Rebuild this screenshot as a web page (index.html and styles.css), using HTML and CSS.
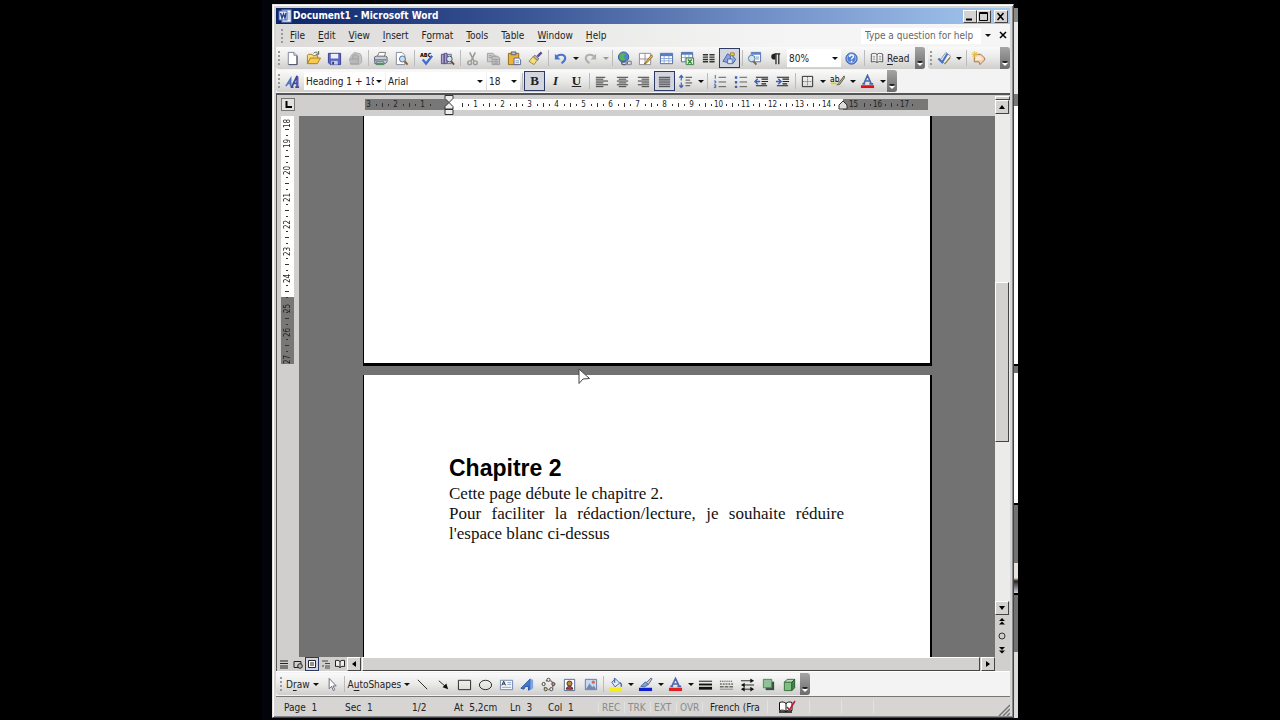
FILE: index.html
```html
<!DOCTYPE html>
<html lang="en">
<head>
    <meta charset="UTF-8">
    <meta name="viewport" content="width=device-width, initial-scale=1.0">
    <title>Document1 - Microsoft Word</title>
    <link rel="stylesheet" href="styles.css">
</head>
<body>
<div class="desktop">
    <div class="window">
        <header class="titlebar">
            <svg class="app-icon" width="14" height="14" viewBox="0 0 14 14"><rect x="4" y="1" width="9" height="12" fill="#fff" stroke="#7d93c8"/><path d="M6 4h6M6 6h6M6 8h6M6 10h6" stroke="#9db0dc"/><rect x="1" y="2" width="8" height="9" fill="#e6ecfa" stroke="#4c68b0"/><path d="M2.500 4l1.500 5 1.500-4 1.500 4 1-5" fill="none" stroke="#24408e" stroke-width="1.400"/></svg>
            <h1>Document1 - Microsoft Word</h1>
            <div class="caption-buttons">
                <button class="caption" aria-label="Minimize"><svg width="10" height="9"><path d="M1 7.500h6" stroke="#000" stroke-width="2"/></svg></button>
                <button class="caption" aria-label="Maximize"><svg width="10" height="9"><path d="M.500.500h8v8h-8zM.500 1.500h8" fill="none" stroke="#000"/></svg></button>
                <button class="caption close" aria-label="Close"><svg width="10" height="9"><path d="M1.500 1l6 7M7.500 1l-6 7" stroke="#000" stroke-width="1.600"/></svg></button>
            </div>
        </header>

        <nav class="menubar">
            <i class="grip"></i>
            <button><u>F</u>ile</button>
            <button><u>E</u>dit</button>
            <button><u>V</u>iew</button>
            <button><u>I</u>nsert</button>
            <button>F<u>o</u>rmat</button>
            <button><u>T</u>ools</button>
            <button>T<u>a</u>ble</button>
            <button><u>W</u>indow</button>
            <button><u>H</u>elp</button>
            <input class="ask" type="text" aria-label="Help question" placeholder="Type a question for help">
            <button class="arrow" aria-label="Recent questions"></button>
            <button class="close-doc" aria-label="Close document"><svg width="8" height="8"><path d="M1 1l6 6M7 1l-6 6" stroke="#000" stroke-width="1.500"/></svg></button>
        </nav>

        <div class="toolbar-row">
            <div class="toolbar">
                <i class="grip"></i>
                <button class="tool" aria-label="New"><svg viewBox="0 0 16 16"><path d="M3.500 1.500h6l3 3v10h-9z" fill="#fff" stroke="#7a7f95"/><path d="M9.500 1.500v3h3" fill="#dfe3ef" stroke="#7a7f95"/><path d="M4 14.500h9V5" fill="none" stroke="#4d5266"/></svg></button>
                <button class="tool" aria-label="Open"><svg viewBox="0 0 16 16"><path d="M1.500 13.500v-9l1-1h4l1 1.500h5v3" fill="#f6dd86" stroke="#a57c22"/><path d="M1.500 13.500l3-6h11l-3.500 6z" fill="#fbc94b" stroke="#a57c22"/><path d="M8 2.500c2-2 4-1.500 5 .500M13.500 0v3.500h-3" fill="none" stroke="#555"/></svg></button>
                <button class="tool" aria-label="Save"><svg viewBox="0 0 16 16"><path d="M1.500 2.500h13v12h-11l-2-2z" fill="#5865c4" stroke="#36408e"/><path d="M4 3h8v5H4z" fill="#edf0fa"/><path d="M4.500 10.500h7v4h-7z" fill="#c7cce6"/><path d="M5.500 11.500h2v3h-2z" fill="#323a78"/></svg></button>
                <button class="tool" aria-label="Permission" disabled><svg viewBox="0 0 16 16"><path d="M4 4l3-2.500 6 1.500 1.500 3v6l-3 2.500H3L1.500 9z" fill="#c4c4c4" stroke="#adadad"/><path d="M2 8.500h9v5H2M5 8.500V5l3-1.500 3 2v3" fill="#b8b8b8" stroke="#a2a2a2"/></svg></button>
                <i class="sep"></i>
                <button class="tool" aria-label="Print"><svg viewBox="0 0 16 16"><path d="M4.500 6l2-4.500h7L12 6" fill="#fff" stroke="#777"/><path d="M1.500 6.500l2-1h10l1.500 1v5l-2 2h-11z" fill="#c9cfd6" stroke="#5b6474"/><path d="M2 9.500h12" stroke="#49536b"/><path d="M3.500 11.500h8v3h-8z" fill="#fff" stroke="#5b6474"/><path d="M4 13.500h7" stroke="#39a24b" stroke-width="2"/></svg></button>
                <button class="tool" aria-label="Print Preview"><svg viewBox="0 0 16 16"><path d="M2.500 1.500h6l3 3v10h-9z" fill="#fff" stroke="#8087a0"/><circle cx="9" cy="8.500" r="3.200" fill="#c3def3" stroke="#5b6a85"/><path d="M11.500 11l3 3.500" stroke="#8a5a20" stroke-width="2"/></svg></button>
                <i class="sep"></i>
                <button class="tool" aria-label="Spelling and Grammar"><svg viewBox="0 0 16 16"><text x="1" y="6" class="icon-abc">ABC</text><path d="M4 9l3.500 4.500L14 5" fill="none" stroke="#3f6fd0" stroke-width="2.500"/></svg></button>
                <button class="tool" aria-label="Research"><svg viewBox="0 0 16 16"><path d="M1.500 3.500h3v10h-3zM4.500 2.500h3v11h-3z" fill="#aaa0cd" stroke="#5a4d8c"/><path d="M8 3.500h4v10H8z" fill="#d8d4ea" stroke="#6a6090"/><circle cx="10" cy="8.500" r="3" fill="#d1e3f2" stroke="#4c5568"/><path d="M12 11l3 3.500" stroke="#715028" stroke-width="2"/></svg></button>
                <i class="sep"></i>
                <button class="tool" aria-label="Cut" disabled><svg viewBox="0 0 16 16"><path d="M5 1.500l4.500 9M11 1.500l-4.500 9" fill="none" stroke="#999" stroke-width="1.600"/><circle cx="5" cy="12.500" r="2" fill="none" stroke="#999" stroke-width="1.500"/><circle cx="11" cy="12.500" r="2" fill="none" stroke="#999" stroke-width="1.500"/></svg></button>
                <button class="tool" aria-label="Copy" disabled><svg viewBox="0 0 16 16"><path d="M1.500 2.500h6l2 2v7h-8z" fill="#ccc" stroke="#a0a0a0"/><path d="M6.500 5.500h6l2 2v7h-8z" fill="#c2c2c2" stroke="#999"/><path d="M8 9h5M8 11h5M8 13h5M3 5h3M3 7h3" stroke="#999"/></svg></button>
                <button class="tool" aria-label="Paste"><svg viewBox="0 0 16 16"><path d="M1.500 2.500h11v12h-11z" fill="#edb43a" stroke="#8f6a1a"/><path d="M4.500 1h5v3h-5z" fill="#b9bccc" stroke="#5c5f70"/><path d="M7.500 7.500h5l2 2v5h-7z" fill="#fff" stroke="#58648e"/><path d="M9 10.500h4M9 12.500h4" stroke="#7d8fc5"/></svg></button>
                <button class="tool" aria-label="Format Painter"><svg viewBox="0 0 16 16"><path d="M14.500 1.500L10 6" stroke="#5c4a8e" stroke-width="2.500"/><path d="M7.500 4.500l4 4-2 1.500-4-4z" fill="#b5b5c2" stroke="#6d6d7a"/><path d="M5.500 6l4 4-3 4.500L1 11z" fill="#f8dd7b" stroke="#a4852e"/></svg></button>
                <i class="sep"></i>
                <button class="tool" aria-label="Undo"><svg viewBox="0 0 16 16"><path d="M3 7c2-3.500 9-4.500 10 0 .500 3-2 4.500-4 6" fill="none" stroke="#4676cf" stroke-width="2.200"/><path d="M2 3v6h6z" fill="#4676cf"/></svg></button>
                <button class="arrow" aria-label="Undo list"></button>
                <button class="tool" aria-label="Redo" disabled><svg viewBox="0 0 16 16"><path d="M13 7c-2-3.500-9-4.500-10 0-.500 3 2 4.500 4 6" fill="none" stroke="#b0b0b0" stroke-width="2.200"/><path d="M14 3v6H8z" fill="#b0b0b0"/></svg></button>
                <button class="arrow" aria-label="Redo list" disabled></button>
                <i class="sep"></i>
                <button class="tool" aria-label="Hyperlink"><svg viewBox="0 0 16 16"><circle cx="7" cy="6.500" r="5.500" fill="#4b87cf" stroke="#2c5b93"/><path d="M3 4c2-3 5-2 6-1L7 6l2 3-3 2-3-3z" fill="#59b25a"/><rect x="5" y="11" width="6" height="3.500" rx="1.700" fill="none" stroke="#5b6373" stroke-width="1.500"/><rect x="9.500" y="11" width="6" height="3.500" rx="1.700" fill="none" stroke="#8a93a3" stroke-width="1.500"/></svg></button>
                <button class="tool" aria-label="Tables and Borders"><svg viewBox="0 0 16 16"><path d="M1.500 2.500h12v12h-12z" fill="#fff" stroke="#8c8c98"/><path d="M7.500 2.500v12M1.500 8.500h12" stroke="#8c8c98"/><path d="M14.500 4L8 12l-1.500 2 2.500-1 6.500-7z" fill="#f0c04a" stroke="#8d6823"/></svg></button>
                <button class="tool" aria-label="Insert Table"><svg viewBox="0 0 16 16"><path d="M1.500 2.500h13v11h-13z" fill="#fff" stroke="#43649f"/><path d="M2 3h12v2.500H2z" fill="#547cc8"/><path d="M5.500 5v8M10.500 5v8M2 8h12M2 10.500h12" stroke="#8fa8d6"/></svg></button>
                <button class="tool" aria-label="Insert Excel Worksheet"><svg viewBox="0 0 16 16"><path d="M1.500 1.500h12v10h-12z" fill="#fff" stroke="#43649f"/><path d="M2 2h11v2H2z" fill="#547cc8"/><path d="M5.500 4v7M9.500 4v7M2 7h11" stroke="#8fa8d6"/><path d="M6.500 7.500h8v7h-8z" fill="#e3f2e2" stroke="#3b7d40"/><path d="M8.500 9l4 4.500M12.500 9l-4 4.500" stroke="#2d8a38" stroke-width="1.500"/></svg></button>
                <button class="tool" aria-label="Columns"><svg viewBox="0 0 16 16"><path d="M2 4h5.500M2 6.500h5.500M2 9h5.500M2 11.500h5.500M9 4h5.500M9 6.500h5.500M9 9h5.500M9 11.500h5.500" stroke="#333" stroke-width="1.500"/></svg></button>
                <button class="tool active" aria-label="Drawing"><svg viewBox="0 0 16 16"><path d="M1 11l5-8 3 2v8z" fill="#8ba4dc" stroke="#4461a8"/><path d="M6 8.500h5v5H6z" fill="#dde7f8" stroke="#51679b"/><path d="M9 2h4v3H9z" fill="#f2ca4d" stroke="#a58326"/><path d="M11 5l3.500 4-3 4.500" fill="#8ab0e6" stroke="#30548e"/></svg></button>
                <i class="sep"></i>
                <button class="tool" aria-label="Document Map"><svg viewBox="0 0 16 16"><path d="M4.500 1.500h10v10h-10z" fill="#fff" stroke="#4c6eb0"/><path d="M5 2h9v2H5z" fill="#5e86d0"/><path d="M9 6.500h4M9 8.500h4" stroke="#7793c6"/><circle cx="5" cy="8" r="3.500" fill="#cbe5f4" stroke="#55779c"/><path d="M7 11l3 3.500" stroke="#8a6330" stroke-width="2"/></svg></button>
                <button class="tool" aria-label="Show paragraph marks"><svg viewBox="0 0 16 16"><path d="M8 3H6.500a3 3 0 0 0 0 6H8z" fill="#222"/><path d="M8.500 3v11M11.500 3v11M7 3h6" stroke="#222" stroke-width="1.300"/></svg></button>
                <span class="combo combo-zoom"><select aria-label="Zoom"><option>80%</option></select></span>
                <button class="tool" aria-label="Word Help"><svg viewBox="0 0 16 16"><circle cx="8" cy="8" r="6" fill="#4f7fd6" stroke="#2f56a4"/><circle cx="8" cy="8" r="4.700" fill="none" stroke="#bcd2f6" stroke-width=".800"/><path d="M6 6.500c0-3 4-3 4-.500 0 1.500-2 1.500-2 3M8 10.500v1.500" fill="none" stroke="#fff" stroke-width="1.500"/></svg></button>
                <i class="sep"></i>
                <button class="text-tool read"><svg width="14" height="14" viewBox="0 0 16 16"><path d="M1.500 3.500c3-1 5-1 6.500.500 1.500-1.500 3.500-1.500 6.500-.500v9c-3-.700-5-.700-6.500.800-1.500-1.500-3.500-1.500-6.500-.800zM8 4v9" fill="#fff" stroke="#444"/><path d="M3 6h3M3 8h3M3 10h3M10 6h3M10 8h3M10 10h3" stroke="#888"/></svg><span><u>R</u>ead</span></button>
                <button class="more" aria-label="Toolbar options"></button>
            </div>
            <div class="toolbar review">
                <i class="grip"></i>
                <button class="tool" aria-label="Final review"><svg viewBox="0 0 16 16"><path d="M9.500 1.500l5 4-6 8-5-4z" fill="#f4f4fa" stroke="#8b90a8"/><path d="M1.500 8l4 4 5.500-9" fill="none" stroke="#4575c8" stroke-width="2.300"/><path d="M8 14l6-7" stroke="#a3844c" stroke-width="1.500"/></svg></button>
                <button class="arrow" aria-label="Review list"></button>
                <i class="sep"></i>
                <button class="tool" aria-label="Insert comment"><svg viewBox="0 0 16 16"><path d="M3.500 3.500h7l4 4v2l-5 5-1-3h-5z" fill="#f6d3b0" stroke="#a4704a"/><path d="M5 6.500h6M5 8.500h7" stroke="#fff"/><path d="M4 0v7M.500 3.500h7M1.500 1l5 5M6.500 1l-5 5" stroke="#e8c03a"/></svg></button>
                <button class="more" aria-label="Toolbar options"></button>
            </div>
        </div>

        <div class="toolbar-row">
            <div class="toolbar">
                <i class="grip"></i>
                <button class="tool" aria-label="Styles and Formatting"><svg viewBox="0 0 16 16"><path d="M1 13L6 5v8M3 10h3" fill="none" stroke="#4f70be" stroke-width="1.700"/><path d="M7 14l6-12v12M9 10h4M11 14h4M6 14h3" fill="none" stroke="#3a4c9a" stroke-width="2"/><path d="M14 3v10" stroke="#9a72b7"/></svg></button>
                <span class="combo combo-style"><select aria-label="Style"><option>Heading 1 + 18 pt</option></select></span>
                <span class="combo combo-font"><select aria-label="Font"><option>Arial</option></select></span>
                <span class="combo combo-size"><select aria-label="Font Size"><option>18</option></select></span>
                <i class="sep"></i>
                <button class="tool letter active" aria-label="Bold"><b>B</b></button>
                <button class="tool letter" aria-label="Italic"><em>I</em></button>
                <button class="tool letter" aria-label="Underline"><u>U</u></button>
                <i class="sep"></i>
                <button class="tool" aria-label="Align Left"><svg viewBox="0 0 16 16"><path d="M2 3.500h10M2 5.500h8M2 7.500h13M2 9.500h8M2 11.500h13M2 13.500h8" stroke="#333"/></svg></button>
                <button class="tool" aria-label="Center"><svg viewBox="0 0 16 16"><path d="M2 3.500h12M4 5.500h8M2 7.500h12M4 9.500h8M2 11.500h12M4 13.500h8" stroke="#333"/></svg></button>
                <button class="tool" aria-label="Align Right"><svg viewBox="0 0 16 16"><path d="M2 3.500h12M6 5.500h8M2 7.500h12M6 9.500h8M2 11.500h12M6 13.500h8" stroke="#333"/></svg></button>
                <button class="tool active" aria-label="Justify"><svg viewBox="0 0 16 16"><path d="M2 3.500h12M2 5.500h12M2 7.500h12M2 9.500h12M2 11.500h12M2 13.500h12" stroke="#333"/></svg></button>
                <button class="tool" aria-label="Line Spacing"><svg viewBox="0 0 16 16"><path d="M3.500 2v5M3.500 9v5M1.500 4l2-2.500 2 2.500M1.500 12l2 2.500 2-2.500" fill="none" stroke="#4263b5" stroke-width="1.300"/><path d="M8 3.500h7M8 6.500h5M8 9.500h7M8 12.500h5" stroke="#444"/></svg></button>
                <button class="arrow" aria-label="Line spacing list"></button>
                <i class="sep"></i>
                <button class="tool" aria-label="Numbering"><svg viewBox="0 0 16 16"><path d="M3.500 1v4M2 7.500h2v2H2.500M2 11.500h2v3H2M2.500 13H4" fill="none" stroke="#3d61b8"/><path d="M7 3.500h8M7 8.500h8M7 13.500h8" stroke="#555"/></svg></button>
                <button class="tool" aria-label="Bullets"><svg viewBox="0 0 16 16"><path d="M2 2.500h2.500V5H2zM2 7.500h2.500V10H2zM2 12.500h2.500V15H2z" fill="#3d61b8"/><path d="M7 3.500h8M7 8.500h8M7 13.500h8" stroke="#555"/></svg></button>
                <button class="tool" aria-label="Decrease Indent"><svg viewBox="0 0 16 16"><path d="M2 3.500h13M8 5.500h7M8 8h7M8 10.500h5M2 12.500h12" stroke="#222" stroke-width="1.200"/><path d="M6.500 8H1M4 5L1 8l3 3" fill="none" stroke="#3d61b8" stroke-width="1.500"/></svg></button>
                <button class="tool" aria-label="Increase Indent"><svg viewBox="0 0 16 16"><path d="M2 3.500h13M8 5.500h7M8 8h7M8 10.500h5M2 12.500h12" stroke="#222" stroke-width="1.200"/><path d="M1 8h5.500M3.500 5l3 3-3 3" fill="none" stroke="#3d61b8" stroke-width="1.500"/></svg></button>
                <i class="sep"></i>
                <button class="tool" aria-label="Outside Border"><svg viewBox="0 0 16 16"><path d="M2.500 2.500h11v11h-11z" fill="none" stroke="#222"/><path d="M8 3v10M3 8h10" stroke="#555" stroke-dasharray="1 1"/></svg></button>
                <button class="arrow" aria-label="Border list"></button>
                <button class="tool" aria-label="Highlight"><svg viewBox="0 0 16 16"><text x="0" y="8" class="icon-ab">ab</text><path d="M15 2L9 10l-2 2 3-.500L15.500 4z" fill="#bdbdb4" stroke="#55553f"/><path d="M1 13.500h13" stroke="#d8d8cf" stroke-width="3"/><path d="M1 10h6" stroke="#d7cf3a" stroke-width="2"/></svg></button>
                <button class="arrow" aria-label="Highlight colors"></button>
                <button class="tool" aria-label="Font Color"><svg viewBox="0 0 16 16"><path d="M4 10.500L8 1.500l4 9M5.500 7.500h5M2.500 10.500h3M10 10.500h4" fill="none" stroke="#4a67ae" stroke-width="1.700"/><path d="M1 12h14v3H1z" fill="#e01010"/></svg></button>
                <button class="arrow" aria-label="Font colors"></button>
                <button class="more" aria-label="Toolbar options"></button>
            </div>
        </div>

        <main class="workspace">
            <button class="tab-kind" aria-label="Left tab"><svg width="7" height="7"><path d="M1.500 0v6H7" fill="none" stroke="#000" stroke-width="2"/></svg></button>

            <div class="ruler">
                <ol class="zone margin before"><li>3</li><li>2</li><li>1</li></ol>
                <ol class="zone text">
                    <li>1</li><li>2</li><li>3</li><li>4</li><li>5</li><li>6</li><li>7</li>
                    <li>8</li><li>9</li><li>10</li><li>11</li><li>12</li><li>13</li><li>14</li>
                </ol>
                <ol class="zone margin after"><li>15</li><li>16</li><li>17</li></ol>
                <svg class="indent first" width="10" height="20" viewBox="0 0 10 20"><path d="M1 .500h8v3l-4 4-4-4zM5 7.500l4 4v2.500H1v-2.500zM1 14.500h8v5H1z" fill="#eee" stroke="#333"/></svg>
                <svg class="indent right" width="10" height="10" viewBox="0 0 10 10"><path d="M5 1l4 4v4H1V5z" fill="#ddd" stroke="#333"/></svg>
            </div>

            <div class="vruler">
                <ol class="zone text"><li>18</li><li>19</li><li>20</li><li>21</li><li>22</li><li>23</li><li>24</li></ol>
                <ol class="zone margin"><li>25</li><li>26</li><li>27</li></ol>
            </div>

            <div class="canvas">
                <section class="page page-end"></section>
                <article class="page">
                    <h2>Chapitre 2</h2>
                    <p>Cette page débute le chapitre 2.</p>
                    <p>Pour faciliter la rédaction/lecture, je souhaite réduire l'espace blanc ci-dessus</p>
                </article>
                <svg class="pointer" width="12" height="17" viewBox="0 0 12 17"><path d="M1 1v14.500l4-4.500 6.500-.500z" fill="#fff" stroke="#444"/></svg>
            </div>

            <div class="vscroll">
                <i class="splitter"></i>
                <button class="scroll-btn up" aria-label="Scroll up"></button>
                <div class="track"><i class="thumb"></i></div>
                <button class="scroll-btn down" aria-label="Scroll down"></button>
                <button class="browse" aria-label="Previous page"><svg width="8" height="8"><path d="M4 0l3 3H1zM4 3.500l3 3H1z"/></svg></button>
                <button class="browse" aria-label="Select browse object"><svg width="8" height="8"><circle cx="4" cy="4" r="3" fill="#ccc" stroke="#333"/></svg></button>
                <button class="browse" aria-label="Next page"><svg width="8" height="8"><path d="M4 4L1 1h6zM4 7.500l-3-3h6z"/></svg></button>
            </div>

            <div class="bottom-row">
                <button class="view" aria-label="Normal View"><svg viewBox="0 0 12 12"><path d="M2 3h8M2 5.500h8M2 8h8M2 10h8" stroke="#222"/></svg></button>
                <button class="view" aria-label="Web Layout View"><svg viewBox="0 0 12 12"><path d="M2 3.500h7v6H2z" fill="none" stroke="#222"/><circle cx="8" cy="8" r="2.300" fill="#bbb" stroke="#222"/></svg></button>
                <button class="view active" aria-label="Print Layout View"><svg viewBox="0 0 12 12"><path d="M2.500 2.500h7v7h-7z" fill="#fff" stroke="#222"/><path d="M4 5h4M4 7h4" stroke="#222"/></svg></button>
                <button class="view" aria-label="Outline View"><svg viewBox="0 0 12 12"><path d="M2 3h6M5 5.500h5M2 8h2M5 8h5M5 10h5" stroke="#444"/></svg></button>
                <button class="view" aria-label="Reading View"><svg viewBox="0 0 12 12"><path d="M1.500 2.500c2-.500 3.500 0 4.500 1 1-1 2.500-1.500 4.500-1v6c-2-.500-3.500 0-4.500 1-1-1-2.500-1.500-4.500-1zM6 3v7" fill="#eee" stroke="#222"/></svg></button>
                <button class="scroll-btn left" aria-label="Scroll left"></button>
                <i class="hthumb"></i>
                <button class="scroll-btn right" aria-label="Scroll right"></button>
            </div>
        </main>

        <div class="toolbar-row drawing">
            <div class="toolbar">
                <i class="grip"></i>
                <button class="text-tool"><span>D<u>r</u>aw</span><i class="caret"></i></button>
                <button class="tool" aria-label="Select Objects"><svg viewBox="0 0 16 16"><path d="M5.500 1.500v11l2.500-2.500 2 4.500 1.500-1-2-4h3.500z" fill="#fff" stroke="#667"/></svg></button>
                <i class="sep"></i>
                <button class="text-tool"><span>A<u>u</u>toShapes</span><i class="caret"></i></button>
                <button class="tool" aria-label="Line"><svg viewBox="0 0 16 16"><path d="M3 3l10 10" stroke="#222"/></svg></button>
                <button class="tool" aria-label="Arrow"><svg viewBox="0 0 16 16"><path d="M3 4l7 6" stroke="#222"/><path d="M13 13l-6-2 4-4z" fill="#111"/></svg></button>
                <button class="tool" aria-label="Rectangle"><svg viewBox="0 0 16 16"><path d="M1.500 3.500h13v10h-13z" fill="none" stroke="#222"/></svg></button>
                <button class="tool" aria-label="Oval"><svg viewBox="0 0 16 16"><ellipse cx="8" cy="8.500" rx="6.500" ry="5" fill="none" stroke="#222"/></svg></button>
                <button class="tool" aria-label="Text Box"><svg viewBox="0 0 16 16"><path d="M1.500 3.500h13v10h-13z" fill="#f5f8fd" stroke="#6c82ae"/><path d="M3 9l2-4.500L7 9M4 7.500h2" fill="none" stroke="#222"/><path d="M9 6h4M9 8h4M3 11h10" stroke="#8ea3cc"/></svg></button>
                <button class="tool" aria-label="WordArt"><svg viewBox="0 0 16 16"><path d="M1 12l10-10v11l-2 1V10H6l-2 3z" fill="#3e7ad6" stroke="#234f9c"/><path d="M11 2l3 1v9l-3 2z" fill="#7ba5e6"/></svg></button>
                <button class="tool" aria-label="Diagram"><svg viewBox="0 0 16 16"><circle cx="8" cy="8.500" r="5" fill="none" stroke="#777" stroke-width="1.500" stroke-dasharray="3 2"/><circle cx="8" cy="3" r="1.700" fill="#f0f0f0" stroke="#444"/><circle cx="2.800" cy="7.500" r="1.700" fill="#eee" stroke="#444"/><circle cx="13.200" cy="7.500" r="1.700" fill="#d88a60" stroke="#444"/><circle cx="5" cy="13" r="1.700" fill="#eecb6a" stroke="#444"/><circle cx="11" cy="13" r="1.700" fill="#eee" stroke="#444"/></svg></button>
                <button class="tool" aria-label="Clip Art"><svg viewBox="0 0 16 16"><path d="M2.500 2.500h11v12h-11z" fill="#fff" stroke="#55678e"/><circle cx="8" cy="7" r="2.700" fill="#c48442" stroke="#4d3018"/><path d="M4.500 13c0-4 7-4 7 0z" fill="#c03c2a" stroke="#432a22"/></svg></button>
                <button class="tool" aria-label="Picture"><svg viewBox="0 0 16 16"><path d="M2.500 2.500h12v11h-12z" fill="#c5d9f5" stroke="#6379a6"/><path d="M3 13l4-6 3 4 1.500-2L14 13z" fill="#7587ae"/><circle cx="11" cy="5.500" r="1.700" fill="#d76b48"/></svg></button>
                <i class="sep"></i>
                <button class="tool" aria-label="Fill Color"><svg viewBox="0 0 16 16"><path d="M4 5.500l4-3.500 4.500 4.500-5 4z" fill="#e3eaf7" stroke="#4e628f"/><path d="M12.500 6c2 1 2 3 1.500 4.500M7 1v5" fill="none" stroke="#4a6fb2" stroke-width="1.500"/><path d="M1 11.500h14v3.500H1z" fill="#f4ee1e"/></svg></button>
                <button class="arrow" aria-label="Fill colors"></button>
                <button class="tool" aria-label="Line Color"><svg viewBox="0 0 16 16"><path d="M3 10l5-5 3 3-4 2.500z" fill="#7ea0dd" stroke="#4966a2"/><path d="M9 6l5-5 1 1-4 6z" fill="#c8cede" stroke="#596680"/><path d="M1 11.500h14v3.500H1z" fill="#1020cc"/></svg></button>
                <button class="arrow" aria-label="Line colors"></button>
                <button class="tool" aria-label="Font Color"><svg viewBox="0 0 16 16"><path d="M4 10L8 1.500l4 8.500M5.500 7.500h5M2.500 10h3M10 10h4" fill="none" stroke="#4a67ae" stroke-width="1.700"/><path d="M1 11.500h14v3.500H1z" fill="#e02020"/></svg></button>
                <button class="arrow" aria-label="Font colors"></button>
                <button class="tool" aria-label="Line Style"><svg viewBox="0 0 16 16"><path d="M1 4.500h14" stroke="#111"/><path d="M1 8h14" stroke="#111" stroke-width="2"/><path d="M1 12h14" stroke="#111" stroke-width="3"/></svg></button>
                <button class="tool" aria-label="Dash Style"><svg viewBox="0 0 16 16"><path d="M1 4.500h14" stroke="#222" stroke-dasharray="1 1"/><path d="M1 7.500h14" stroke="#222" stroke-dasharray="2 1"/><path d="M1 10.500h14" stroke="#222" stroke-dasharray="4 1"/><path d="M1 13h14" stroke="#888"/></svg></button>
                <button class="tool" aria-label="Arrow Style"><svg viewBox="0 0 16 16"><path d="M1 4h12M3 8.500h12M2 13h12" stroke="#222"/><path d="M15 4l-4-2.500v5zM1 8.500L5 6v5zM15 13l-4-2.500v5zM1 13l4-2.500v5z" fill="#111"/></svg></button>
                <button class="tool" aria-label="Shadow Style"><svg viewBox="0 0 16 16"><path d="M5 5h9v9H5z" fill="#3c4a42"/><path d="M2.500 2.500h9v9h-9z" fill="#8ec296" stroke="#4d8256"/></svg></button>
                <button class="tool" aria-label="3-D Style"><svg viewBox="0 0 16 16"><path d="M2.500 5.500h8v9h-8z" fill="#82bd86" stroke="#356f3d"/><path d="M2.500 5.500l3-3h8l-3 3z" fill="#b8ddb8" stroke="#356f3d"/><path d="M10.500 14.500v-9l3-3v9z" fill="#438a4b" stroke="#245a2c"/></svg></button>
                <button class="more" aria-label="Toolbar options"></button>
            </div>
        </div>

        <footer class="statusbar">
            <span class="st-page">Page&nbsp; 1</span>
            <span class="st-sec">Sec&nbsp; 1</span>
            <span class="st-count">1/2</span>
            <span class="st-at">At&nbsp; 5,2cm</span>
            <span class="st-line">Ln&nbsp; 3</span>
            <span class="st-col">Col&nbsp; 1</span>
            <span class="mode">REC</span>
            <span class="mode">TRK</span>
            <span class="mode">EXT</span>
            <span class="mode">OVR</span>
            <span class="lang">French (Fra</span>
            <span class="proof"><svg width="18" height="14" viewBox="0 0 18 14"><path d="M1.500 2.500c3-1 5-.500 6.500 1 1.500-1.500 3.500-2 6-1v8c-2.500-.700-4.500-.500-6 1-1.500-1.500-3.500-1.700-6.500-1zM8 3v9" fill="#fff" stroke="#111"/><path d="M1 12h13" stroke="#111" stroke-width="1.500"/><path d="M9 7l2.500 3L17 1" fill="none" stroke="#c01c30" stroke-width="1.600"/></svg></span>
            <span class="cell"></span>
            <span class="cell"></span>
            <span class="cell"></span>
            <svg class="size-grip" width="12" height="12"><path d="M1 12L12 1M5 12l7-7M9 12l3-3" stroke="#777" stroke-width="1.500"/></svg>
        </footer>
    </div>

    <div class="behind">
        <i class="b-title"></i>
        <i class="b-bars"></i>
        <i class="b-ruler"></i>
        <i class="b-page"></i>
        <i class="b-gap"></i>
        <i class="b-text"></i>
        <i class="b-gray"></i>
        <i class="b-panel"></i>
        <i class="b-gray"></i>
        <i class="b-foot"></i>
    </div>
</div>
</body>
</html>
```

FILE: styles.css
```css
* {
    box-sizing: border-box;
}

body {
    margin: 0;
    background: #000;
    font-family: "DejaVu Sans Condensed", "DejaVu Sans", sans-serif;
    font-size: 10px;
    color: #222;
    overflow: hidden;
}

button {
    margin: 0;
    padding: 0;
    border: 0;
    background: none;
    font: inherit;
    color: inherit;
}

ol {
    margin: 0;
    padding: 0;
    list-style: none;
}

i {
    display: block;
    flex: none;
}

.desktop {
    display: flex;
    height: 100vh;
    margin: 0 262px;
    padding: 4px 0 2px 10px;
    background: #03030a;
}

.window {
    flex: 1;
    min-width: 0;
    display: flex;
    flex-direction: column;
    padding: 3px 3px 0;
    background: #d6d5d3;
    border: 1px solid #e4e3e1;
    border-right-color: #444;
    border-bottom-color: #444;
    box-shadow: inset 1px 1px #fff, inset -1px -1px #888;
}

/* Title bar */
.titlebar {
    display: flex;
    align-items: center;
    height: 16px;
    padding: 0 2px;
    background: linear-gradient(to right, #0c2569, #3c5796 35%, #6f8dc6 65%, #a4c8ef);
}

.titlebar h1 {
    flex: 1;
    margin: 0 0 0 1px;
    font-size: 10px;
    line-height: 16px;
    color: #fff;
}

.caption-buttons {
    display: flex;
}

.caption,
.scroll-btn {
    display: flex;
    align-items: center;
    justify-content: center;
    background: #d4d3d1;
    border: 1px solid;
    border-color: #fff #444 #444 #fff;
}

.caption {
    width: 14px;
    height: 13px;
}

.close {
    margin-left: 3px;
}

/* Menu bar */
.menubar {
    display: flex;
    align-items: center;
    height: 23px;
    padding: 0 1px 0 3px;
    background: linear-gradient(to right, #dcdbd9, #f5f5f5 70%);
}

.menubar > button {
    padding: 0 6px 0 7px;
    line-height: 20px;
}

.menubar u,
.text-tool u {
    text-underline-offset: 2px;
}

.menubar .ask {
    width: 120px;
    height: 16px;
    margin-left: auto;
    padding: 0 4px;
    border: 0;
    background: #fff;
    font: inherit;
}

.ask::placeholder {
    color: #666;
}

.menubar > .arrow {
    padding: 0;
    width: 13px;
}

.menubar > .close-doc {
    padding: 0 2px 0 5px;
}

.grip {
    width: 2px;
    height: 14px;
    margin: 0 2px;
    background: repeating-linear-gradient(#999 0 2px, transparent 2px 4px);
}

.menubar .grip {
    margin-right: 0;
}

/* Toolbars */
.toolbar-row {
    display: flex;
    flex: none;
    height: 23px;
    background: #f3f3f3;
}

.toolbar {
    display: flex;
    align-items: center;
    height: 22px;
    border-radius: 3px;
    background: linear-gradient(#fafafa, #e9e9e8 50%, #cfcecc);
}

.tool {
    display: flex;
    flex: none;
    align-items: center;
    justify-content: center;
    width: 21px;
    height: 20px;
}

.tool svg {
    width: 15px;
    height: 15px;
}

.tool.active,
.view.active {
    border: 1px solid #2d3a66;
    background: #d3d6df;
}

.letter {
    font-family: "Liberation Serif", serif;
    font-size: 13px;
    font-weight: bold;
}

.sep {
    width: 1px;
    height: 16px;
    margin: 0 1px 0 2px;
    background: #bbb;
}

.arrow {
    flex: none;
    width: 9px;
    height: 20px;
}

.arrow::before,
.combo::after,
.caret {
    content: "";
    display: block;
    width: 0;
    margin: 0 auto;
    border: 3px solid transparent;
    border-top-color: #111;
    border-bottom: 0;
}

.arrow:disabled::before {
    border-top-color: #999;
}

.combo {
    display: flex;
    flex: none;
    align-items: center;
    height: 18px;
    margin-left: 1px;
    padding-right: 3px;
    background: #fff;
}

.combo select {
    flex: 1;
    min-width: 0;
    height: 18px;
    padding: 0 0 0 2px;
    border: 0;
    background: none;
    appearance: none;
    font: inherit;
    color: inherit;
    text-overflow: clip;
}

.combo::after {
    margin: 0 0 0 2px;
}

.combo-style { width: 81px; }
.combo-font { width: 100px; }
.combo-size { width: 33px; }
.combo-zoom { width: 54px; }

.text-tool {
    display: flex;
    flex: none;
    align-items: center;
    gap: 3px;
    height: 20px;
    padding: 0 2px;
}

.read {
    padding: 0 5px 0 4px;
}

.more {
    align-self: stretch;
    width: 10px;
    padding: 12px 2px 0;
    border-radius: 0 3px 3px 0;
    background: linear-gradient(#a5a5a5, #6c6c6c);
}

.more::before {
    content: "";
    display: block;
    width: 0;
    border: 3px solid transparent;
    border-top-color: #fff;
    border-bottom: 0;
    filter: drop-shadow(0 -2px #222);
}

.review {
    flex: 1;
    margin-left: 3px;
}

.review .more {
    margin-left: auto;
}

.icon-abc {
    font-size: 6px;
    font-weight: bold;
}

.icon-ab {
    font-size: 9px;
}

/* Document area */
.workspace {
    flex: 1;
    min-height: 0;
    display: grid;
    grid-template-columns: 22px 1fr 15px;
    grid-template-rows: 21px 1fr 14px;
    border: solid #555;
    border-width: 2px 0 0 1px;
    background: #d0cfcd;
}

.tab-kind {
    display: flex;
    align-items: center;
    justify-content: center;
    width: 14px;
    height: 13px;
    margin: 3px 0 0 4px;
    border: 1px solid #777;
    background: #e2e2e0;
}

.ruler {
    position: relative;
    display: flex;
    height: 11px;
    margin: 4px 67px 0 66px;
    font-size: 8px;
    line-height: 11px;
}

.zone {
    display: flex;
    overflow: hidden;
}

.zone.text { background: #fff; }
.zone.margin { background: #777; }

.zone li {
    flex: none;
    text-align: center;
}

.ruler li {
    width: 27px;
    background:
        linear-gradient(#333, #333) 0 4px / 1px 4px no-repeat,
        linear-gradient(#333, #333) 6px 5px / 1px 2px no-repeat,
        linear-gradient(#333, #333) 21px 5px / 1px 2px no-repeat;
}

.ruler .before {
    width: 84px;
    padding-right: 13px;
    justify-content: flex-end;
}

.ruler .text {
    flex: 1;
    padding-left: 13px;
}

.ruler .after {
    width: 85px;
}

.after li:first-child {
    width: 21px;
    background: none;
}

.indent {
    position: absolute;
}

.indent.first {
    left: 79px;
    top: -4px;
}

.indent.right {
    right: 80px;
    top: 1px;
}

.vruler {
    width: 13px;
    margin-left: 4px;
    font-size: 8px;
    line-height: 13px;
}

.vruler .zone {
    flex-direction: column;
}

.vruler .text {
    height: 181px;
}

.vruler .margin {
    height: 67px;
}

.vruler li {
    width: 13px;
    height: 27px;
    writing-mode: vertical-rl;
    transform: rotate(180deg);
    background:
        linear-gradient(#333, #333) 5px 0 / 4px 1px no-repeat,
        linear-gradient(#333, #333) 6px 6px / 2px 1px no-repeat,
        linear-gradient(#333, #333) 6px 21px / 2px 1px no-repeat;
}

/* partly scrolled centimetres at the start of each zone */
.vruler .text li:first-child {
    height: 14px;
    background: linear-gradient(#333, #333) 5px 0 / 4px 1px no-repeat;
}

.vruler .margin li:first-child {
    height: 22px;
}

.canvas {
    position: relative;
    display: flex;
    flex-direction: column;
    min-height: 0;
    overflow: hidden;
    padding: 0 63px 0 64px;
    background: #727272;
}

.page {
    flex: 1;
    padding: 78px 86px 0 85px;
    background: #fff;
    border: solid #000;
    border-width: 0 2px 0 1px;
    font-family: "Liberation Serif", serif;
    font-size: 17px;
    line-height: 20px;
    color: #111;
}

.page-end {
    flex: none;
    height: 250px;
    margin-bottom: 9px;
    border-bottom-width: 3px;
}

.page h2 {
    margin: 0 0 1px;
    font: bold 23px/30px "Liberation Sans", Arial, sans-serif;
    color: #000;
}

.page p {
    margin: 0;
    text-align: justify;
}

.pointer {
    position: absolute;
    left: 279px;
    top: 252px;
}

/* Scroll bars */
.vscroll {
    grid-column: 3;
    grid-row: 1 / 4;
    display: flex;
    flex-direction: column;
    padding-top: 1px;
}

.workspace > .canvas,
.workspace > .vruler {
    grid-row: 2;
}

.splitter {
    height: 4px;
    border: 1px solid;
    border-color: #fff #444 #444 #fff;
}

.scroll-btn {
    flex: none;
    width: 14px;
    height: 14px;
}

.scroll-btn::before {
    content: "";
    border: 3px solid transparent;
}

.up::before { border-bottom: 4px solid #000; border-top: 0; }
.down::before { border-top: 4px solid #000; border-bottom: 0; }
.left::before { border-right: 4px solid #000; border-left: 0; }
.right::before { border-left: 4px solid #000; border-right: 0; }

.track {
    flex: 1;
    display: flex;
    flex-direction: column;
    background: #ebebea;
}

.track::before,
.track::after {
    content: "";
    flex: 1;
}

.track::before {
    flex-grow: 1.060;
}

.thumb,
.hthumb {
    background: #d2d1cf;
    border: 1px solid;
    border-color: #fff #444 #444 #fff;
}

.thumb {
    height: 160px;
    width: 14px;
}

.browse {
    display: flex;
    align-items: center;
    justify-content: center;
    width: 14px;
    height: 14px;
}

.browse:last-child {
    margin-bottom: 14px;
}

.bottom-row {
    grid-column: 1 / 3;
    grid-row: 3;
    display: flex;
}

.view {
    width: 14px;
    height: 14px;
    display: flex;
    align-items: center;
    justify-content: center;
}

.view svg {
    flex: none;
    width: 12px;
    height: 12px;
}

.hthumb {
    flex: 1;
    height: 14px;
    margin: 0 1px;
}

/* Drawing toolbar */
.drawing {
    height: 26px;
    padding-top: 1px;
    border-top: 1px solid #fff;
    border-bottom: 1px solid #777;
}

.drawing .grip {
    margin: 0 2px 0 4px;
}

/* Status bar */
.statusbar {
    flex: none;
    display: flex;
    align-items: center;
    height: 20px;
    padding-left: 8px;
    white-space: pre;
}

.st-page { width: 61px; }
.st-sec { width: 67px; }
.st-count { width: 42px; }
.st-at { width: 56px; }
.st-line { width: 38px; }
.st-col { width: 50px; }

.mode {
    width: 26px;
    padding-left: 3px;
    border-left: 1px solid #e2e2e0;
    color: #8a8a8a;
}

.lang {
    width: 65px;
    padding-left: 7px;
    border-left: 1px solid #e2e2e0;
}

.proof {
    display: flex;
    width: 42px;
    padding-left: 10px;
    border-left: 1px solid #e2e2e0;
}

.cell {
    width: 32px;
    height: 14px;
    border-left: 1px solid #e2e2e0;
}

.size-grip {
    margin: 6px 0 0 auto;
}

/* Edge of the window underneath */
.behind {
    flex: none;
    display: flex;
    flex-direction: column;
    width: 4px;
    padding-top: 4px;
}

.b-title { height: 14px; background: #8a8a8a; }
.b-bars { height: 72px; background: #e8e8e8; }
.b-ruler { height: 12px; background: #777; }
.b-page { height: 258px; background: #fff; }
.b-gap { height: 9px; background: #727272; border-top: 2px solid #000; }
.b-text { height: 130px; background: #fff; }
.b-gray { flex: 1; background: #727272; border-top: 2px solid #000; }
.b-panel { height: 30px; background: linear-gradient(#e8e0dc 50%, #222 60%, #d0d0d8); }
.b-foot { height: 66px; background: #dcdcda; }
```
